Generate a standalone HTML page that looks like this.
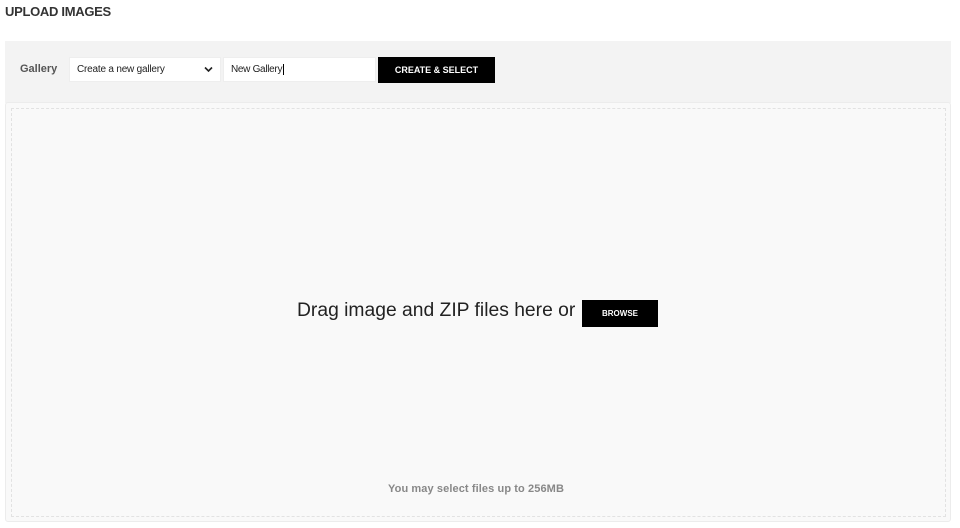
<!DOCTYPE html>
<html><head><style>
body{margin:0;width:960px;height:528px;background:#fff;font-family:"Liberation Sans",sans-serif;position:relative;overflow:hidden}
.a{position:absolute}
</style></head><body>
<div class="a" style="left:5px;top:4px;font-size:13px;font-weight:bold;color:#333;letter-spacing:-0.3px">UPLOAD IMAGES</div>
<div class="a" style="left:5px;top:41px;width:946px;height:62px;background:#f3f3f3"></div>
<div class="a" style="left:20px;top:63px;font-size:11px;color:#555;font-weight:bold">Gallery</div>
<div class="a" style="left:69px;top:57px;width:152px;height:25px;background:#fff;border:1px solid #eee;box-sizing:border-box"></div>
<div class="a" style="left:77px;top:64px;font-size:10px;color:#222;letter-spacing:-0.2px">Create a new gallery</div>
<svg class="a" style="left:204px;top:66px" width="9" height="7"><path d="M1 1.5L4.5 5L8 1.5" stroke="#222" stroke-width="1.6" fill="none"/></svg>
<div class="a" style="left:223px;top:57px;width:153px;height:25px;background:#fff;border:1px solid #eee;box-sizing:border-box"></div>
<div class="a" style="left:231px;top:64px;font-size:10px;color:#222;letter-spacing:-0.3px">New Gallery<span style="border-left:1px solid #000;margin-left:1px"></span></div>
<div class="a" style="left:378px;top:57px;width:117px;height:26px;background:#000;color:#fff;font-size:9px;font-weight:bold;text-align:center;line-height:26px">CREATE &amp; SELECT</div>
<div class="a" style="left:5px;top:102px;width:946px;height:420px;background:#f9f9f9;border:1px solid #ececec;border-radius:3px;box-sizing:border-box"></div>
<div class="a" style="left:11px;top:108px;width:935px;height:409px;border:1px dashed #e2e2e2;box-sizing:border-box"></div>
<div class="a" style="left:297px;top:300px;font-size:19.3px;color:#222">Drag image and ZIP files here or</div>
<div class="a" style="left:582px;top:300px;width:76px;height:27px;background:#000;color:#fff;font-size:8px;font-weight:bold;text-align:center;line-height:27px">BROWSE</div>
<div class="a" style="left:388px;top:483px;font-size:11px;font-weight:bold;color:#888;letter-spacing:0.1px">You may select files up to 256MB</div>
</body></html>
